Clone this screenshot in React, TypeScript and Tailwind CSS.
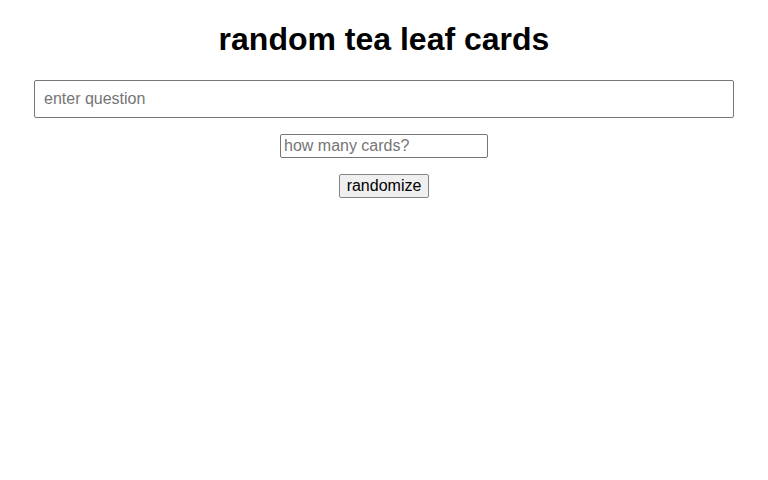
export default function App() {
  return (
    <div
      className="min-h-[480px] bg-white text-black"
      style={{ fontFamily: '"Liberation Sans", Arial, sans-serif' }}
    >
      <h1 className="pt-[21px] text-center text-[32px] font-bold leading-[37px]">
        random tea leaf cards
      </h1>
      <div className="mt-[22px] flex flex-col items-center gap-4">
        <input
          type="text"
          placeholder="enter question"
          className="box-border h-[38px] w-[700px] rounded-[2px] border border-[#767676] px-[9px] text-[16px] leading-[18px] placeholder:text-[#757575] outline-none"
        />
        <input
          type="number"
          placeholder="how many cards?"
          className="box-border h-[24px] w-[208px] rounded-[2px] border border-[#767676] px-[3px] text-[16px] leading-[18px] placeholder:text-[#757575] outline-none"
        />
        <button
          type="button"
          className="box-border h-[24px] w-[90px] rounded-[2px] border border-[#858585] bg-[#efefef] px-[6px] text-center text-[16px] leading-[18px] text-black"
        >
          randomize
        </button>
      </div>
    </div>
  );
}
